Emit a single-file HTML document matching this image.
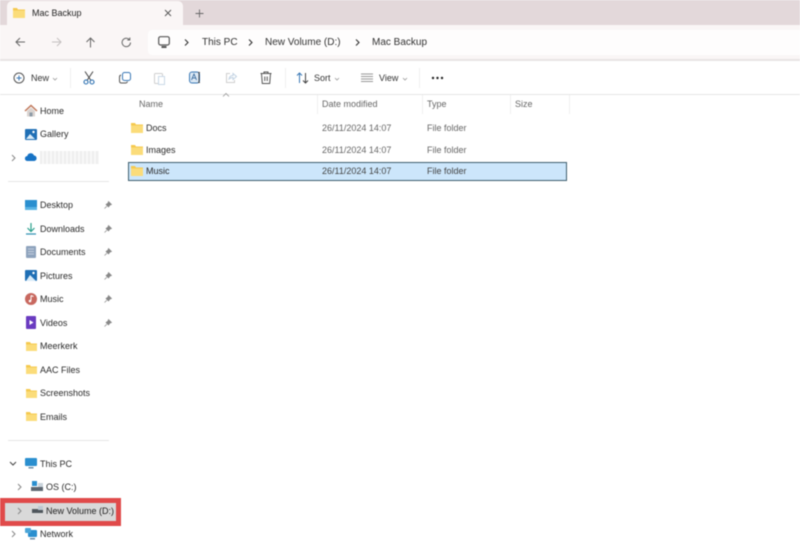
<!DOCTYPE html>
<html><head><meta charset="utf-8">
<style>
html,body{margin:0;padding:0;background:#fff}
#p{position:relative;width:800px;height:548px;overflow:hidden;background:#fff;font-family:"Liberation Sans",sans-serif;font-size:9px;color:#2a2a2a;filter:blur(.4px)}
.t{position:absolute;white-space:nowrap;line-height:12px}
.a{position:absolute}
svg{position:absolute;overflow:visible}
.g{color:#666}
</style></head><body><div id="p">
<div class="a" style="left:0;top:0;width:800px;height:25px;background:#e3d8da"></div>
<div class="a" style="left:7px;top:1px;width:176px;height:24px;background:#faf6f6;border-radius:5px 5px 0 0"></div>
<div class="a" style="left:0;top:25px;width:800px;height:35px;background:#faf6f6"></div>
<div class="a" style="left:148px;top:30px;width:652px;height:25px;background:#fefdfd;border-radius:4px 0 0 4px"></div>
<div class="a" style="left:0;top:59px;width:800px;height:2px;background:#e8e4e5"></div>
<div class="a" style="left:0;top:94px;width:800px;height:1px;background:#e6e6e6"></div>

<svg style="left:13px;top:8px" width="12" height="10"><path d="M0 0h4l1 1.500h7V10H0z" fill="#f5c94e"/><rect x="0" y="2.500" width="12" height="7.500" fill="#fbdc7a"/></svg>
<div class="t" style="left:32px;top:7px;color:#222">Mac Backup</div>
<svg style="left:164px;top:9px" width="8" height="8"><path d="M1 1l6 6M7 1l-6 6" stroke="#555" stroke-width=".9"/></svg>
<svg style="left:195px;top:9px" width="9" height="9"><path d="M4.500 .5v8M.5 4.500h8" stroke="#666" stroke-width=".9"/></svg>

<svg style="left:15px;top:37px" width="11" height="10"><path d="M10 5H1M5 1L1 5l4 4" fill="none" stroke="#666"/></svg>
<svg style="left:51px;top:37px" width="11" height="10"><path d="M1 5h9M6 1l4 4-4 4" fill="none" stroke="#c4c0c0"/></svg>
<svg style="left:85px;top:37px" width="11" height="11"><path d="M5.500 10.500V1M1.500 5l4-4 4 4" fill="none" stroke="#666"/></svg>
<svg style="left:121px;top:37px" width="11" height="11"><path d="M9.500 5.500a4.200 4.200 0 1 1-1.200-3M8.800 .5v2.500H6.300" fill="none" stroke="#666"/></svg>

<svg style="left:158px;top:36px" width="12" height="13"><rect x=".7" y=".7" width="10.600" height="8.300" rx="1.800" fill="none" stroke="#555" stroke-width="1.200"/><path d="M3.500 11h5" stroke="#555" stroke-width="2"/></svg>
<svg style="left:184px;top:39px" width="5" height="7"><path d="M1 .5l3 3-3 3" fill="none" stroke="#333" stroke-width="1.100"/></svg>
<div class="t" style="left:202px;top:37px;font-size:10px;color:#333">This PC</div>
<svg style="left:248px;top:39px" width="5" height="7"><path d="M1 .5l3 3-3 3" fill="none" stroke="#333" stroke-width="1.100"/></svg>
<div class="t" style="left:265px;top:37px;font-size:10px;color:#333">New Volume (D:)</div>
<svg style="left:355px;top:39px" width="5" height="7"><path d="M1 .5l3 3-3 3" fill="none" stroke="#333" stroke-width="1.100"/></svg>
<div class="t" style="left:372px;top:37px;font-size:10px;color:#333">Mac Backup</div>

<svg style="left:13px;top:72px" width="12" height="12"><circle cx="6" cy="6" r="5" fill="none" stroke="#555"/><path d="M6 3.500v5M3.500 6h5" stroke="#3a78b5"/></svg>
<div class="t" style="left:31px;top:72px;color:#333">New</div>
<svg style="left:52px;top:77px" width="6" height="4"><path d="M1 1l2 2 2-2" fill="none" stroke="#999" stroke-width=".8"/></svg>
<div class="a" style="left:70px;top:68px;width:1px;height:20px;background:#f0f0f0"></div>

<svg style="left:83px;top:71px" width="12" height="14"><path d="M2 .5l6 9M10 .5l-6 9" stroke="#444" fill="none"/><circle cx="3" cy="11" r="2" fill="none" stroke="#2a6fb0" stroke-width="1.100"/><circle cx="9" cy="11" r="2" fill="none" stroke="#2a6fb0" stroke-width="1.100"/></svg>
<svg style="left:119px;top:72px" width="12" height="12"><rect x="3.500" y=".5" width="8" height="8" rx="2" fill="none" stroke="#3a78b5"/><path d="M2 3Q.5 3.500.5 5v4q0 2 2 2h4q1.500 0 2-1.500" fill="none" stroke="#555"/></svg>
<svg style="left:154px;top:72px" width="12" height="13" opacity=".35"><rect x=".5" y="1.500" width="8" height="10" rx="1" fill="none" stroke="#777"/><rect x="4.500" y="4.500" width="6" height="8" fill="#fff" stroke="#6a93bb"/></svg>
<svg style="left:189px;top:71px" width="13" height="13"><rect x=".5" y="1" width="10" height="11" rx="2.500" fill="#dbe8f4" stroke="#3a78b5"/><path d="M2.500 9l2.500-6 2.500 6M3.500 7h3" fill="none" stroke="#2a5f95" stroke-width=".8"/><path d="M9 1.500h2M10 1.500v10M9 11.500h2" stroke="#333" stroke-width=".8"/></svg>
<svg style="left:225px;top:72px" width="12" height="12" opacity=".4"><path d="M5 1.500H1.500v9h8V8" fill="none" stroke="#888"/><path d="M4 7q.5-3.500 4-3.500V1.500l3.500 3-3.500 3V5.500Q5.500 5.500 4 7z" fill="none" stroke="#6a93bb"/></svg>
<svg style="left:260px;top:71px" width="12" height="13"><path d="M.5 2.500h11M4 2.500V1h4v1.500M1.500 2.500l.8 10h7.400l.8-10M4.800 5.500v4.500M7.200 5.500v4.500" fill="none" stroke="#555"/></svg>
<div class="a" style="left:285px;top:68px;width:1px;height:20px;background:#f0f0f0"></div>

<svg style="left:296px;top:72px" width="13" height="12"><path d="M3.500 11V1M1 3.500L3.500 1 6 3.500" fill="none" stroke="#3a78b5"/><path d="M9.500 1v10M7 8.500L9.500 11 12 8.500" fill="none" stroke="#444"/></svg>
<div class="t" style="left:314px;top:72px;color:#333">Sort</div>
<svg style="left:334px;top:77px" width="6" height="4"><path d="M1 1l2 2 2-2" fill="none" stroke="#999" stroke-width=".8"/></svg>
<svg style="left:361px;top:73px" width="12" height="10"><path d="M0 1h12M0 3.500h12M0 6h12M0 8.500h12" stroke="#777" stroke-width=".8"/></svg>
<div class="t" style="left:379px;top:72px;color:#333">View</div>
<svg style="left:402px;top:77px" width="6" height="4"><path d="M1 1l2 2 2-2" fill="none" stroke="#999" stroke-width=".8"/></svg>
<div class="a" style="left:419px;top:68px;width:1px;height:20px;background:#f0f0f0"></div>
<svg style="left:431px;top:76px" width="13" height="4"><circle cx="2" cy="2" r="1.200" fill="#222"/><circle cx="6.500" cy="2" r="1.200" fill="#222"/><circle cx="11" cy="2" r="1.200" fill="#222"/></svg>

<svg style="left:222px;top:93px" width="8" height="4"><path d="M1 3.500l3-3 3 3" fill="none" stroke="#999" stroke-width=".8"/></svg>
<div class="t g" style="left:139px;top:98px">Name</div>
<div class="t g" style="left:322px;top:98px">Date modified</div>
<div class="t g" style="left:427px;top:98px">Type</div>
<div class="t g" style="left:515px;top:98px">Size</div>
<div class="a" style="left:317px;top:95px;width:1px;height:19px;background:#f0f0f0"></div>
<div class="a" style="left:422px;top:95px;width:1px;height:19px;background:#f0f0f0"></div>
<div class="a" style="left:510px;top:95px;width:1px;height:19px;background:#f0f0f0"></div>
<div class="a" style="left:569px;top:95px;width:1px;height:19px;background:#f0f0f0"></div>

<div class="a" style="left:128px;top:162px;width:437px;height:17px;background:#cce6fb;border:1px solid #3f5f6f"></div>

<svg style="left:131px;top:123px" width="12" height="10"><path d="M0 0h4l1 1.500h7V10H0z" fill="#f5c94e"/><rect x="0" y="2.500" width="12" height="7.500" fill="#fbdc7a"/></svg>
<div class="t" style="left:146px;top:122px">Docs</div>
<div class="t g" style="left:322px;top:122px">26/11/2024 14:07</div>
<div class="t g" style="left:427px;top:122px">File folder</div>
<svg style="left:131px;top:145px" width="12" height="10"><path d="M0 0h4l1 1.500h7V10H0z" fill="#f5c94e"/><rect x="0" y="2.500" width="12" height="7.500" fill="#fbdc7a"/></svg>
<div class="t" style="left:146px;top:144px">Images</div>
<div class="t g" style="left:322px;top:144px">26/11/2024 14:07</div>
<div class="t g" style="left:427px;top:144px">File folder</div>
<svg style="left:131px;top:166px" width="12" height="10"><path d="M0 0h4l1 1.500h7V10H0z" fill="#f5c94e"/><rect x="0" y="2.500" width="12" height="7.500" fill="#fbdc7a"/></svg>
<div class="t" style="left:146px;top:165px">Music</div>
<div class="t" style="left:322px;top:165px;color:#444">26/11/2024 14:07</div>
<div class="t" style="left:427px;top:165px;color:#444">File folder</div>

<svg style="left:25px;top:105px" width="12" height="12"><path d="M2 6v5.500h8V6L6 2.500z" fill="#d9d3d0"/><path d="M0 6L6 .5 12 6" fill="none" stroke="#c0785a" stroke-width="1.500"/><rect x="4.500" y="7.500" width="3" height="4" fill="#8d9aa6"/></svg>
<div class="t" style="left:40px;top:105px">Home</div>
<svg style="left:25px;top:129px" width="12" height="11"><rect width="12" height="11" rx="1" fill="#1f6fb5"/><circle cx="8.500" cy="3" r="1.200" fill="#fff"/><path d="M1 10l4-5 5 5z" fill="#d9ebf8"/></svg>
<div class="t" style="left:40px;top:128px">Gallery</div>
<svg style="left:11px;top:154px" width="5" height="8"><path d="M1 1l3 3-3 3" fill="none" stroke="#888"/></svg>
<svg style="left:25px;top:153px" width="12" height="8"><path d="M2.500 8a2.500 2.500 0 0 1-.2-5A3.500 3.500 0 0 1 9 2.500 2.800 2.800 0 0 1 9.500 8z" fill="#1773c5"/></svg>
<div class="a" style="left:40px;top:151px;width:59px;height:13px;background:repeating-linear-gradient(90deg,#eee 0 2px,#f8f8f8 2px 4px)"></div>
<div class="a" style="left:8px;top:181px;width:101px;height:1px;background:#e6e6e6"></div>

<svg style="left:25px;top:200px" width="12" height="10"><rect width="12" height="10" fill="#2a8fcf"/><rect y="7" width="12" height="3" fill="#5ab4e4"/></svg>
<div class="t" style="left:40px;top:199px">Desktop</div>
<svg style="left:25px;top:223px" width="12" height="12"><path d="M6 0v8M2.500 5L6 8.500 9.500 5" fill="none" stroke="#2aa08c" stroke-width="1.200"/><path d="M1 11h10" stroke="#2a8fb0" stroke-width="1.200"/></svg>
<div class="t" style="left:40px;top:223px">Downloads</div>
<svg style="left:26px;top:246px" width="10" height="12"><rect width="10" height="12" rx="1" fill="#8ea3bd"/><path d="M2 3h6M2 5.500h6M2 8h6" stroke="#d5dde8" stroke-width=".8"/></svg>
<div class="t" style="left:40px;top:246px">Documents</div>
<svg style="left:25px;top:270px" width="12" height="11"><rect width="12" height="11" rx="1" fill="#1f6fb5"/><circle cx="8.500" cy="3" r="1.200" fill="#fff"/><path d="M1 11l4-6 6 6z" fill="#d9ebf8"/></svg>
<div class="t" style="left:40px;top:270px">Pictures</div>
<svg style="left:25px;top:293px" width="12" height="12"><circle cx="6" cy="6" r="6" fill="#c8685f"/><path d="M6 2.500v5M6 2.500l2.500 1" stroke="#fff" fill="none"/><circle cx="5" cy="8" r="1.300" fill="#fff"/></svg>
<div class="t" style="left:40px;top:293px">Music</div>
<svg style="left:26px;top:316px" width="10" height="13"><rect width="10" height="13" rx="1" fill="#6a3bc0"/><path d="M3.500 4l4 2.500-4 2.500z" fill="#fff"/></svg>
<div class="t" style="left:40px;top:317px">Videos</div>

<svg style="left:104px;top:201px" width="8" height="8"><path d="M4.500 .5l3 3-1.500.5-1.500 2-2.500-2.500 2-1.500zM2.800 5.200L.5 7.500" fill="#888" stroke="#888" stroke-width=".7"/></svg>
<svg style="left:104px;top:225px" width="8" height="8"><path d="M4.500 .5l3 3-1.500.5-1.500 2-2.500-2.500 2-1.500zM2.800 5.200L.5 7.500" fill="#888" stroke="#888" stroke-width=".7"/></svg>
<svg style="left:104px;top:248px" width="8" height="8"><path d="M4.500 .5l3 3-1.500.5-1.500 2-2.500-2.500 2-1.500zM2.800 5.200L.5 7.500" fill="#888" stroke="#888" stroke-width=".7"/></svg>
<svg style="left:104px;top:272px" width="8" height="8"><path d="M4.500 .5l3 3-1.500.5-1.500 2-2.500-2.500 2-1.500zM2.800 5.200L.5 7.500" fill="#888" stroke="#888" stroke-width=".7"/></svg>
<svg style="left:104px;top:295px" width="8" height="8"><path d="M4.500 .5l3 3-1.500.5-1.500 2-2.500-2.500 2-1.500zM2.800 5.200L.5 7.500" fill="#888" stroke="#888" stroke-width=".7"/></svg>
<svg style="left:104px;top:319px" width="8" height="8"><path d="M4.500 .5l3 3-1.500.5-1.500 2-2.500-2.500 2-1.500zM2.800 5.200L.5 7.500" fill="#888" stroke="#888" stroke-width=".7"/></svg>

<svg style="left:26px;top:342px" width="11" height="9"><path d="M0 0h4l1 1.500h6V9H0z" fill="#f5c94e"/><rect y="2.500" width="11" height="6.500" fill="#fbdc7a"/></svg>
<div class="t" style="left:40px;top:340px">Meerkerk</div>
<svg style="left:26px;top:365px" width="11" height="9"><path d="M0 0h4l1 1.500h6V9H0z" fill="#f5c94e"/><rect y="2.500" width="11" height="6.500" fill="#fbdc7a"/></svg>
<div class="t" style="left:40px;top:364px">AAC Files</div>
<svg style="left:26px;top:389px" width="11" height="9"><path d="M0 0h4l1 1.500h6V9H0z" fill="#f5c94e"/><rect y="2.500" width="11" height="6.500" fill="#fbdc7a"/></svg>
<div class="t" style="left:40px;top:387px">Screenshots</div>
<svg style="left:26px;top:412px" width="11" height="9"><path d="M0 0h4l1 1.500h6V9H0z" fill="#f5c94e"/><rect y="2.500" width="11" height="6.500" fill="#fbdc7a"/></svg>
<div class="t" style="left:40px;top:411px">Emails</div>
<div class="a" style="left:8px;top:440px;width:101px;height:1px;background:#e6e6e6"></div>

<svg style="left:9px;top:461px" width="8" height="5"><path d="M1 1l3 3 3-3" fill="none" stroke="#444"/></svg>
<svg style="left:25px;top:458px" width="12" height="11"><rect width="12" height="8" rx="1" fill="#2a8fcf"/><rect x="3.500" y="9" width="5" height="1.500" fill="#6b8ea8"/></svg>
<div class="t" style="left:40px;top:458px">This PC</div>
<svg style="left:17px;top:483px" width="5" height="8"><path d="M1 1l3 3-3 3" fill="none" stroke="#888"/></svg>
<svg style="left:31px;top:481px" width="12" height="11"><rect x="1" width="5" height="5" fill="#2a8fcf"/><rect y="6" width="12" height="4" fill="#5c6670"/><rect x="7" y="2" width="5" height="4" fill="#c9d3db"/></svg>
<div class="t" style="left:46px;top:481px">OS (C:)</div>

<div class="a" style="left:0;top:498px;width:111px;height:18px;background:#d9d9d9;border:5px solid #e04a4a"></div>
<svg style="left:17px;top:507px" width="5" height="8"><path d="M1 1l3 3-3 3" fill="none" stroke="#888"/></svg>
<svg style="left:32px;top:506px" width="11" height="8"><rect y="3" width="11" height="4" fill="#4f565c"/><rect x="6" y="0" width="5" height="4" fill="#bcc8d2"/></svg>
<div class="t" style="left:46px;top:505px;color:#222">New Volume (D:)</div>
<svg style="left:11px;top:530px" width="5" height="8"><path d="M1 1l3 3-3 3" fill="none" stroke="#888"/></svg>
<svg style="left:25px;top:528px" width="12" height="12"><rect x="3" y="2" width="9" height="7" rx="1" fill="#2a8fcf"/><rect y="0" width="6" height="5" rx="1" fill="#4aa5d8"/><rect x="5" y="10" width="5" height="1.500" fill="#6b8ea8"/></svg>
<div class="t" style="left:40px;top:528px">Network</div>
</div></body></html>
